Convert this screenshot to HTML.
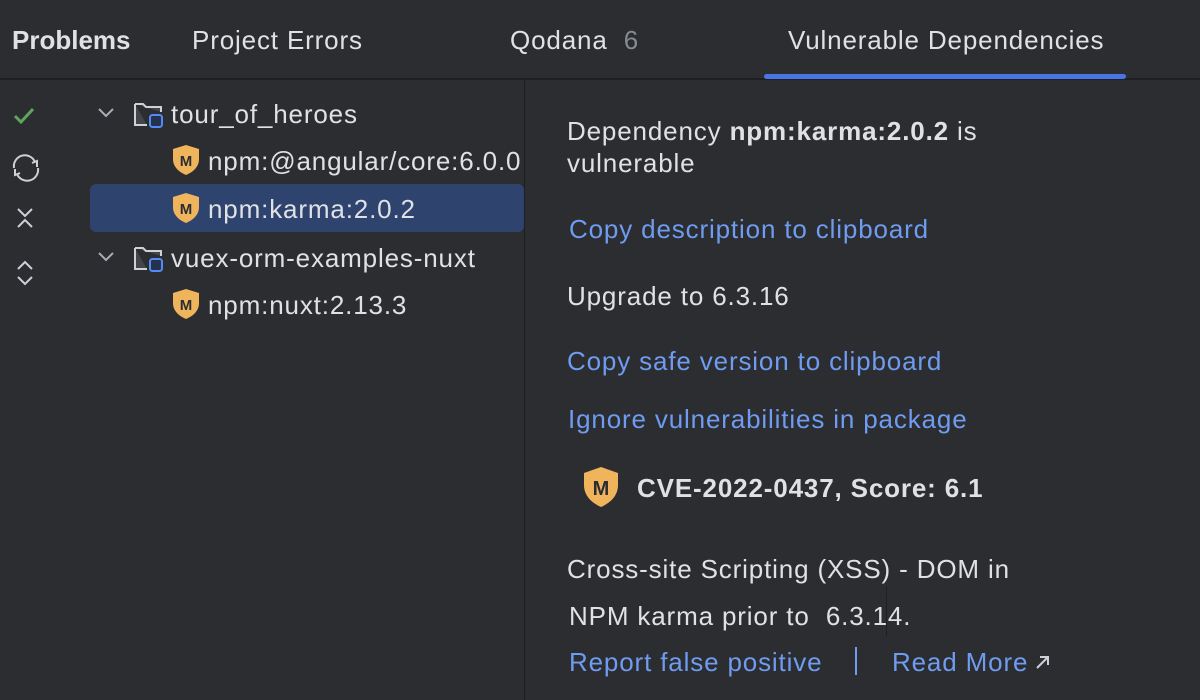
<!DOCTYPE html>
<html><head><meta charset="utf-8"><style>
body{margin:0;width:1200px;height:700px;background:#2b2d30;font-family:"Liberation Sans",sans-serif;color:#dfe1e5;overflow:hidden;position:relative}
.a{position:absolute;white-space:nowrap;font-size:26px;line-height:30px;letter-spacing:0.85px}
.l{color:#6f9bf0}
.b{font-weight:bold}
svg{position:absolute}
</style></head><body>
<div class="a b" style="left:12px;top:25px;letter-spacing:0px">Problems</div>
<div class="a" style="left:192px;top:25px">Project Errors</div>
<div class="a" style="left:510px;top:25px">Qodana <span style="color:#868a91;margin-left:8px">6</span></div>
<div class="a" style="left:788px;top:25px">Vulnerable Dependencies</div>
<div style="position:absolute;left:0;top:78px;width:1200px;height:2px;background:#1e1f22"></div>
<div style="position:absolute;left:764px;top:74px;width:362px;height:5px;border-radius:3px;background:#4a74e6"></div>
<div style="position:absolute;left:524px;top:80px;width:1px;height:620px;background:#1e1f22"></div>

<svg style="left:10px;top:104px" width="30" height="24"><path d="M5 12 L11 18 L23 5" stroke="#5fa55b" stroke-width="3" fill="none"/></svg>
<svg style="left:8px;top:152px" width="36" height="32"><path d="M6 16 A11 11 0 0 1 27 10 M30 16 A11 11 0 0 1 9 22" stroke="#ced0d6" stroke-width="2" fill="none"/><path d="M24 11 L29 9 L29 15 M12 21 L7 23 L7 17" stroke="#ced0d6" stroke-width="2" fill="none"/></svg>
<svg style="left:14px;top:206px" width="26" height="30"><path d="M4 3 L11 10 L18 3 M4 21 L11 14 L18 21" stroke="#ced0d6" stroke-width="2" fill="none"/></svg>
<svg style="left:14px;top:258px" width="26" height="30"><path d="M4 11 L11 4 L18 11 M4 19 L11 26 L18 19" stroke="#ced0d6" stroke-width="2" fill="none"/></svg>

<div style="position:absolute;left:90px;top:184px;width:434px;height:48px;background:#2e436e;border-radius:6px"></div>
<svg style="left:96px;top:104px" width="20" height="16"><path d="M3 5 L10 12 L17 5" stroke="#a8adb5" stroke-width="2" fill="none"/></svg>
<svg style="left:96px;top:248px" width="20" height="16"><path d="M3 5 L10 12 L17 5" stroke="#a8adb5" stroke-width="2" fill="none"/></svg>
<svg style="left:132px;top:100px" width="36" height="30"><path d="M3 4 H11 L14 7 H29 V12 M3 4 V25 H15" stroke="#ced0d6" stroke-width="2" fill="#43454a"/><rect x="18" y="15" width="12" height="12" rx="2.5" stroke="#548af7" stroke-width="2" fill="#25324d"/></svg>
<svg style="left:132px;top:244px" width="36" height="30"><path d="M3 4 H11 L14 7 H29 V12 M3 4 V25 H15" stroke="#ced0d6" stroke-width="2" fill="#43454a"/><rect x="18" y="15" width="12" height="12" rx="2.5" stroke="#548af7" stroke-width="2" fill="#25324d"/></svg>
<div class="a" style="left:171px;top:99px">tour_of_heroes</div>
<div class="a" style="left:171px;top:243px">vuex-orm-examples-nuxt</div>

<svg style="left:172px;top:144px" width="28" height="32"><path d="M14 1 L27 5 V15 C27 23 21 28 14 31 C7 28 1 23 1 15 V5 Z" fill="#f0b55c"/><text x="14" y="22" text-anchor="middle" font-family="Liberation Sans" font-weight="bold" font-size="15" fill="#2b2d30">M</text></svg>
<svg style="left:172px;top:192px" width="28" height="32"><path d="M14 1 L27 5 V15 C27 23 21 28 14 31 C7 28 1 23 1 15 V5 Z" fill="#f0b55c"/><text x="14" y="22" text-anchor="middle" font-family="Liberation Sans" font-weight="bold" font-size="15" fill="#2b2d30">M</text></svg>
<svg style="left:172px;top:288px" width="28" height="32"><path d="M14 1 L27 5 V15 C27 23 21 28 14 31 C7 28 1 23 1 15 V5 Z" fill="#f0b55c"/><text x="14" y="22" text-anchor="middle" font-family="Liberation Sans" font-weight="bold" font-size="15" fill="#2b2d30">M</text></svg>
<div class="a" style="left:208px;top:146px">npm:@angular/core:6.0.0</div>
<div class="a" style="left:208px;top:194px">npm:karma:2.0.2</div>
<div class="a" style="left:208px;top:290px">npm:nuxt:2.13.3</div>

<div class="a" style="left:567px;top:116px">Dependency <b>npm:karma:2.0.2</b> is</div>
<div class="a" style="left:567px;top:148px">vulnerable</div>
<div class="a l" style="left:569px;top:214px">Copy description to clipboard</div>
<div class="a" style="left:567px;top:281px">Upgrade to 6.3.16</div>
<div class="a l" style="left:567px;top:346px">Copy safe version to clipboard</div>
<div class="a l" style="left:568px;top:404px">Ignore vulnerabilities in package</div>
<svg style="left:581px;top:465px" width="40" height="44"><path d="M20 2 L37 8 V20 C37 31 29 38 20 42 C11 38 3 31 3 20 V8 Z" fill="#f0b55c"/><text x="20" y="30" text-anchor="middle" font-family="Liberation Sans" font-weight="bold" font-size="20" fill="#2b2d30">M</text></svg>
<div class="a b" style="left:637px;top:473px">CVE-2022-0437, Score: 6.1</div>
<div class="a" style="left:567px;top:554px">Cross-site Scripting (XSS) - DOM in</div>
<div class="a" style="left:569px;top:601px">NPM karma prior to &nbsp;6.3.14.</div>
<div style="position:absolute;left:886px;top:586px;width:1px;height:50px;background:#1e1f22"></div>
<div class="a l" style="left:569px;top:647px">Report false positive</div>
<div style="position:absolute;left:855px;top:647px;width:2px;height:28px;background:#6f9bf0"></div>
<div class="a l" style="left:892px;top:647px">Read More</div>
<svg style="left:1033px;top:652px" width="20" height="20"><path d="M4 16 L15 5 M7 5 H15 V13" stroke="#ced0d6" stroke-width="2" fill="none"/></svg>
</body></html>
